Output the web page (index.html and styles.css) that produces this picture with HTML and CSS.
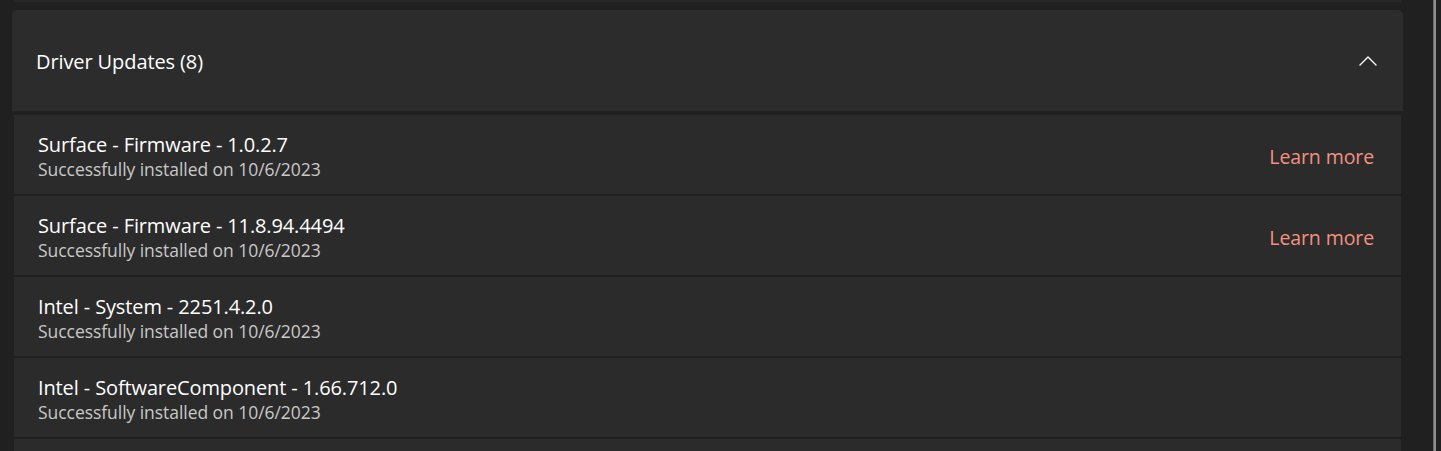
FILE: index.html
```html
<!DOCTYPE html>
<html lang="en">
<head>
<meta charset="utf-8">
<title>Driver Updates</title>
<link rel="stylesheet" href="styles.css">
</head>
<body>
<div class="page">
  <div class="main">
    <div class="prev-card"></div>
    <section class="expander">
      <div class="exp-header">
        <span class="exp-title">Driver Updates (8)</span>
        <svg class="chevron" width="18" height="10" viewBox="0 0 18 10" aria-hidden="true">
          <path d="M1 9 L9 1 L17 9" fill="none" stroke="#ffffff" stroke-width="1.4" stroke-linecap="round" stroke-linejoin="round"/>
        </svg>
      </div>
      <div class="items">
        <div class="item">
          <div class="item-text">
            <div class="item-title">Surface - Firmware - 1.0.2.7</div>
            <div class="item-sub">Successfully installed on 10/6/2023</div>
          </div>
          <a class="learn">Learn more</a>
        </div>
        <div class="item">
          <div class="item-text">
            <div class="item-title">Surface - Firmware - 11.8.94.4494</div>
            <div class="item-sub">Successfully installed on 10/6/2023</div>
          </div>
          <a class="learn">Learn more</a>
        </div>
        <div class="item">
          <div class="item-text">
            <div class="item-title">Intel - System - 2251.4.2.0</div>
            <div class="item-sub">Successfully installed on 10/6/2023</div>
          </div>
        </div>
        <div class="item">
          <div class="item-text">
            <div class="item-title">Intel - SoftwareComponent - 1.66.712.0</div>
            <div class="item-sub">Successfully installed on 10/6/2023</div>
          </div>
        </div>
        <div class="item"></div>
      </div>
    </section>
  </div>
  <div class="scrollbar"><div class="thumb"></div></div>
</div>
</body>
</html>
```

FILE: styles.css
```css
html, body {
  margin: 0;
  padding: 0;
  background: #202020;
  height: 451px;
  overflow: hidden;
}
body {
  font-family: "Segoe UI", "Open Sans", "Noto Sans", sans-serif;
  color: #ffffff;
}
.page {
  display: flex;
  height: 451px;
  overflow: hidden;
}
.main {
  width: 1391px;
  margin-left: 12px;
  display: flex;
  flex-direction: column;
  overflow: hidden;
}
.prev-card {
  height: 2px;
  margin: 0 2px;
  background: #282828;
  flex: none;
}
.expander {
  margin-top: 8px;
  display: flex;
  flex-direction: column;
}
.exp-header {
  height: 101px;
  background: #2c2c2c;
  border-radius: 5px 5px 0 0;
  display: flex;
  align-items: center;
  justify-content: space-between;
  padding: 2px 26px 0 24px;
  box-sizing: border-box;
  flex: none;
}
.exp-title {
  font-size: 20px;
  letter-spacing: -0.1px;
}
.chevron {
  display: block;
  margin-top: -1px;
}
.items {
  margin-top: 4px;
  display: flex;
  flex-direction: column;
  gap: 2px;
  padding: 0 2px;
}
.item {
  height: 79px;
  flex: none;
  background: #2b2b2b;
  display: flex;
  align-items: center;
  justify-content: space-between;
  padding: 3px 27px 0 24px;
  box-sizing: border-box;
}
.item-text {
  display: flex;
  flex-direction: column;
}
.item-title {
  font-size: 20px;
  line-height: 26px;
  letter-spacing: -0.12px;
}
.item-sub {
  font-size: 17.5px;
  line-height: 22px;
  color: #c8c8c8;
  letter-spacing: -0.05px;
}
.learn {
  font-size: 19.5px;
  color: #f2917f;
  letter-spacing: -0.1px;
}
.scrollbar {
  width: 4px;
  margin-left: 30px;
  height: 451px;
  display: flex;
}
.thumb {
  width: 3px;
  height: 100%;
  background: #8f8f8f;
  border-left: 1px solid #6a6a6a;
  box-sizing: border-box;
}
```
